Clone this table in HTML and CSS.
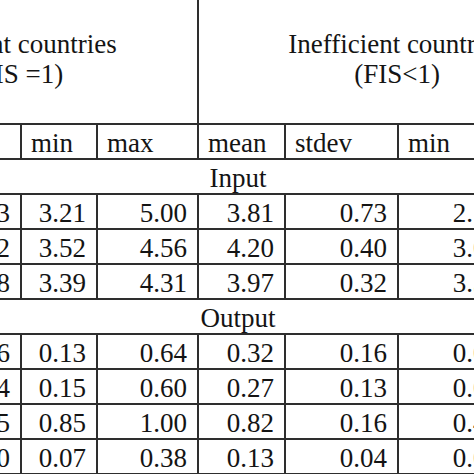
FILE: index.html
```html
<!DOCTYPE html>
<html lang="en">
<head>
  <meta charset="UTF-8">
  <title>Efficiency statistics</title>
  <link rel="stylesheet" href="styles.css">
</head>
<body>
  <table class="stats">
    <colgroup>
      <col class="c-mean-l">
      <col class="c-stdev-l">
      <col class="c-min-l">
      <col class="c-max-l">
      <col class="c-mean-r">
      <col class="c-stdev-r">
      <col class="c-min-r">
      <col class="c-max-r">
    </colgroup>
    <thead>
      <!-- groups -->
      <tr class="group-row">
        <th colspan="4">Efficient countries<br>(FIS =1)</th>
        <th colspan="4">Inefficient countries<br>(FIS&lt;1)</th>
      </tr>
      <tr class="head-row">
        <th>mean</th><th>stdev</th><th>min</th><th>max</th>
        <th>mean</th><th>stdev</th><th>min</th><th>max</th>
      </tr>
    </thead>
    <tbody>
      <tr class="section"><td colspan="8">Input</td></tr>
      <tr><td>4.12</td><td>0.53</td><td>3.21</td><td>5.00</td><td>3.81</td><td>0.73</td><td>2.75</td><td>4.92</td></tr>
      <tr><td>4.05</td><td>0.32</td><td>3.52</td><td>4.56</td><td>4.20</td><td>0.40</td><td>3.04</td><td>4.88</td></tr>
      <tr><td>3.88</td><td>0.28</td><td>3.39</td><td>4.31</td><td>3.97</td><td>0.32</td><td>3.31</td><td>4.55</td></tr>
      <tr class="section"><td colspan="8">Output</td></tr>
      <tr><td>0.36</td><td>0.16</td><td>0.13</td><td>0.64</td><td>0.32</td><td>0.16</td><td>0.05</td><td>0.71</td></tr>
      <tr><td>0.31</td><td>0.14</td><td>0.15</td><td>0.60</td><td>0.27</td><td>0.13</td><td>0.06</td><td>0.58</td></tr>
      <tr><td>0.93</td><td>0.05</td><td>0.85</td><td>1.00</td><td>0.82</td><td>0.16</td><td>0.42</td><td>1.00</td></tr>
      <tr><td>0.17</td><td>0.10</td><td>0.07</td><td>0.38</td><td>0.13</td><td>0.04</td><td>0.03</td><td>0.24</td></tr>
    </tbody>
  </table>
</body>
</html>
```
FILE: styles.css
```css
html, body {
  margin: 0;
  padding: 0;
  background: #fff;
  overflow: hidden;
}

body {
  width: 474px;
  height: 474px;
  font-family: "Liberation Serif", "Times New Roman", serif;
  font-size: 27px;
  color: #141414;
}

.stats {
  border-collapse: collapse;
  table-layout: fixed;
  width: 760px;
  margin-left: -165px;
}

.c-mean-l { width: 85px; }
.c-stdev-l { width: 100px; }
.c-min-l { width: 76px; }
.c-max-l { width: 101px; }
.c-mean-r { width: 87px; }
.c-stdev-r { width: 113px; }
.c-min-r { width: 113px; }
.c-max-r { width: 85px; }

.stats th,
.stats td {
  border: 2px solid #2e2e2e;
  padding: 4px 10px 0 9px;
  line-height: 29px;
  font-weight: normal;
  white-space: nowrap;
  overflow: hidden;
}

.stats td {
  text-align: right;
}

.stats .head-row th {
  text-align: left;
}

.stats .group-row th {
  border-top: none;
  padding: 29px 0 34px;
  line-height: 30px;
  text-align: center;
}

.stats .section td {
  text-align: center;
  padding-left: 44px;
  padding-right: 0;
}
```
